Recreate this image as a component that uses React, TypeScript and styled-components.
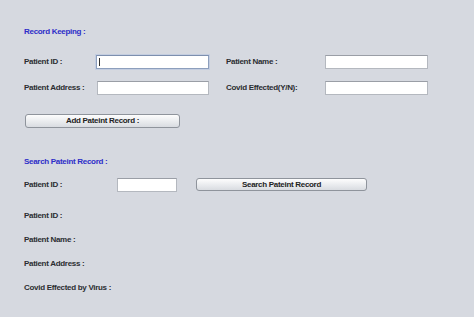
import styled, { createGlobalStyle } from 'styled-components';

const GlobalStyle = createGlobalStyle`
  html, body {
    margin: 0;
    padding: 0;
    background: #d6d9e0;
  }
  body {
    font-family: "Liberation Sans", Arial, sans-serif;
  }
`;

const Page = styled.div`
  width: 474px;
  height: 317px;
  box-sizing: border-box;
  padding: 27px 0 0 24px;
  background: #d6d9e0;
  color: #2b2d31;
  font-size: 8px;
  font-weight: 700;
  letter-spacing: -0.3px;
  overflow: hidden;
`;

interface GapProps {
  top?: number;
}

const Title = styled.div<GapProps>`
  height: 10px;
  line-height: 10px;
  color: #2d2dc8;
  margin-top: ${(p) => p.top ?? 0}px;
`;

const FormGrid = styled.div`
  display: grid;
  grid-template-columns: 72px 130px 99px 103px;
  grid-auto-rows: 14px;
  row-gap: 12px;
  align-items: center;
  margin-top: 18px;
`;

const Label = styled.span`
  line-height: 10px;
  white-space: nowrap;
`;

const FieldWrap = styled.div<{ width: number }>`
  position: relative;
  width: ${(p) => p.width}px;
  height: 14px;
`;

const Field = styled.input<{ focused?: boolean }>`
  box-sizing: border-box;
  width: 100%;
  height: 100%;
  margin: 0;
  padding: 0 2px;
  background: #fff;
  border: 1px solid ${(p) => (p.focused ? '#8d9fbd' : '#b4b8bf')};
  border-top-color: ${(p) => (p.focused ? '#7d8fae' : '#9a9ea6')};
  box-shadow: ${(p) => (p.focused ? '0 0 0 1px #c3cde0' : 'none')};
  outline: none;
  font-size: 8px;
`;

const Caret = styled.span`
  position: absolute;
  left: 3px;
  top: 3px;
  width: 1px;
  height: 8px;
  background: #333;
`;

const Button = styled.button<{ width: number; height: number }>`
  box-sizing: border-box;
  width: ${(p) => p.width}px;
  height: ${(p) => p.height}px;
  padding: 0;
  border: 1px solid #8f949c;
  border-radius: 3px;
  background: linear-gradient(#fdfdfd, #e9ebee 55%, #d9dce1);
  font-family: "Liberation Sans", Arial, sans-serif;
  font-size: 8px;
  font-weight: 700;
  letter-spacing: -0.3px;
  color: #222;
  line-height: 10px;
`;

const AddButton = styled(Button)`
  display: block;
  margin: 19px 0 0 1px;
`;

const SearchRow = styled.div`
  display: flex;
  align-items: center;
  height: 13px;
  margin-top: 11px;
`;

const SearchLabel = styled(Label)`
  width: 93px;
`;

const SearchButton = styled(Button)`
  margin-left: 19px;
`;

const Results = styled.div`
  display: flex;
  flex-direction: column;
  gap: 14px;
  margin-top: 20px;
`;

const ResultLabel = styled.div`
  height: 10px;
  line-height: 10px;
`;

export default function App() {
  return (
    <>
      <GlobalStyle />
      <Page>
        <Title>Record Keeping :</Title>
        <FormGrid>
          <Label>Patient ID :</Label>
          <FieldWrap width={113}>
            <Field focused />
            <Caret />
          </FieldWrap>
          <Label>Patient Name :</Label>
          <FieldWrap width={103}>
            <Field />
          </FieldWrap>
          <Label>Patient Address :</Label>
          <FieldWrap width={112}>
            <Field style={{ marginLeft: 1 }} />
          </FieldWrap>
          <Label>Covid Effected(Y/N):</Label>
          <FieldWrap width={103}>
            <Field />
          </FieldWrap>
        </FormGrid>
        <AddButton width={155} height={14}>
          Add Pateint Record :
        </AddButton>

        <Title top={29}>Search Pateint Record :</Title>
        <SearchRow>
          <SearchLabel>Patient ID :</SearchLabel>
          <FieldWrap width={60}>
            <Field />
          </FieldWrap>
          <SearchButton width={171} height={13}>
            Search Pateint Record
          </SearchButton>
        </SearchRow>

        <Results>
          <ResultLabel>Patient ID :</ResultLabel>
          <ResultLabel>Patient Name :</ResultLabel>
          <ResultLabel>Patient Address :</ResultLabel>
          <ResultLabel>Covid Effected by Virus :</ResultLabel>
        </Results>
      </Page>
    </>
  );
}
